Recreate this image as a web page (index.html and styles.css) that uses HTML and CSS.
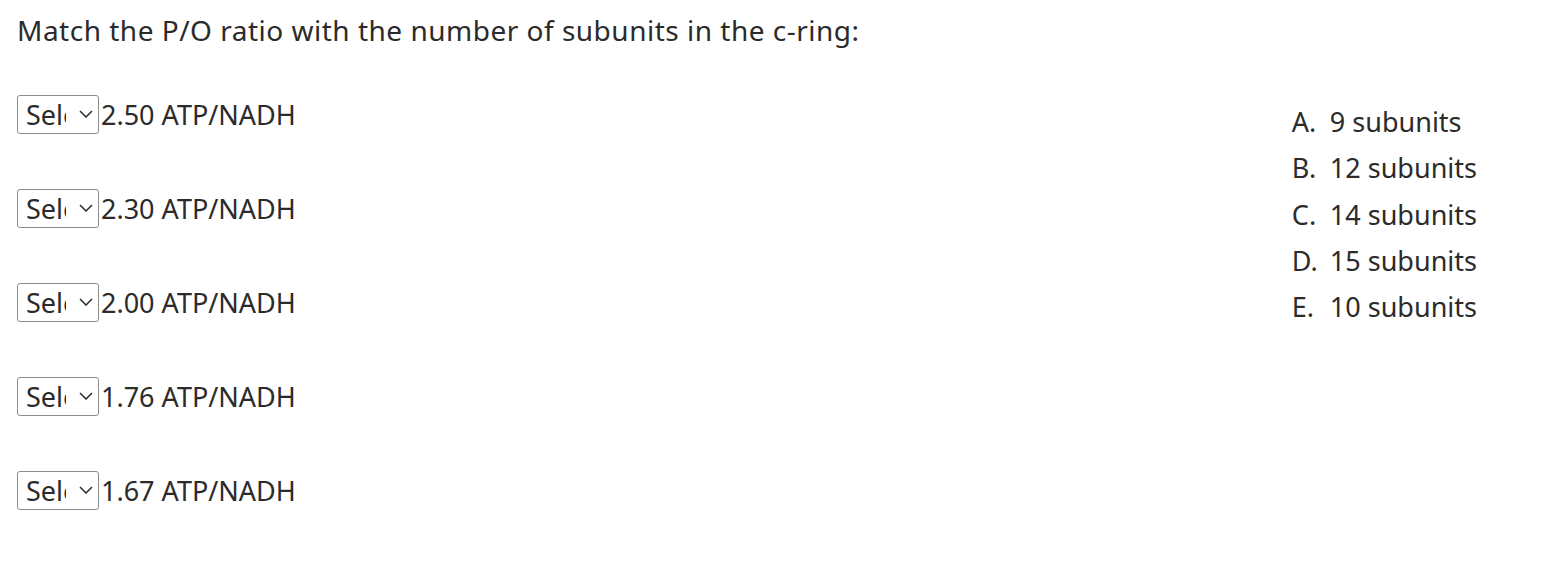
FILE: index.html
```html
<!DOCTYPE html>
<html lang="en">
<head>
  <meta charset="UTF-8" />
  <meta name="viewport" content="width=device-width, initial-scale=1.0" />
  <title>Matching question</title>
  <link rel="stylesheet" href="styles.css">
</head>
<body>
  <div class="question">
    <p class="prompt">Match the P/O ratio with the number of subunits in the c-ring:</p>
    <div class="match">
      <div class="pairs">
        <div class="pair">
          <span class="picker">
            <select><option>Select</option><option>A</option><option>B</option><option>C</option><option>D</option><option>E</option></select>
            <svg class="chevron" viewBox="0 0 14 8"><path d="M1 1 L7 7 L13 1" /></svg>
          </span>
          <span class="label">2.50 ATP/NADH</span>
        </div>
        <div class="pair">
          <span class="picker">
            <select><option>Select</option><option>A</option><option>B</option><option>C</option><option>D</option><option>E</option></select>
            <svg class="chevron" viewBox="0 0 14 8"><path d="M1 1 L7 7 L13 1" /></svg>
          </span>
          <span class="label">2.30 ATP/NADH</span>
        </div>
        <div class="pair">
          <span class="picker">
            <select><option>Select</option><option>A</option><option>B</option><option>C</option><option>D</option><option>E</option></select>
            <svg class="chevron" viewBox="0 0 14 8"><path d="M1 1 L7 7 L13 1" /></svg>
          </span>
          <span class="label">2.00 ATP/NADH</span>
        </div>
        <div class="pair">
          <span class="picker">
            <select><option>Select</option><option>A</option><option>B</option><option>C</option><option>D</option><option>E</option></select>
            <svg class="chevron" viewBox="0 0 14 8"><path d="M1 1 L7 7 L13 1" /></svg>
          </span>
          <span class="label">1.76 ATP/NADH</span>
        </div>
        <div class="pair">
          <span class="picker">
            <select><option>Select</option><option>A</option><option>B</option><option>C</option><option>D</option><option>E</option></select>
            <svg class="chevron" viewBox="0 0 14 8"><path d="M1 1 L7 7 L13 1" /></svg>
          </span>
          <span class="label">1.67 ATP/NADH</span>
        </div>
      </div>
      <ol class="choices">
        <li><span class="key">A.</span>9 subunits</li>
        <li><span class="key">B.</span>12 subunits</li>
        <li><span class="key">C.</span>14 subunits</li>
        <li><span class="key">D.</span>15 subunits</li>
        <li><span class="key">E.</span>10 subunits</li>
      </ol>
    </div>
  </div>
</body>
</html>
```

FILE: styles.css
```css
body {
  margin: 0;
  font-family: "Noto Sans", "Open Sans", sans-serif;
  color: #2b2b2b;
  background: #fff;
}
.question {
  padding: 10px 17px;
}
.prompt {
  margin: 0;
  font-size: 28px;
  letter-spacing: 0.5px;
  line-height: 40px;
}
.match {
  display: flex;
  justify-content: space-between;
  margin-top: 45px;
}
.pairs {
  display: flex;
  flex-direction: column;
  gap: 55px;
}
.pair {
  display: flex;
  align-items: center;
  height: 39px;
}
.picker {
  position: relative;
  width: 82px;
  height: 39px;
}
.picker select {
  appearance: none;
  -webkit-appearance: none;
  width: 100%;
  height: 100%;
  margin: 0;
  padding: 0 32px 0 8px;
  border: 1px solid #8c8c8c;
  border-radius: 3px;
  background: #fff;
  color: #2b2b2b;
  font-family: inherit;
  font-size: 27px;
}
.chevron {
  position: absolute;
  right: 6px;
  top: 15px;
  width: 14px;
  height: 8px;
  fill: none;
  stroke: #2b2b2b;
  stroke-width: 1.5;
  pointer-events: none;
}
.label {
  margin-left: 2px;
  font-size: 27px;
}
.choices {
  list-style: none;
  margin: 4px 0 0;
  padding: 0 54px 0 0;
  font-size: 27px;
}
.choices li {
  height: 46.3px;
  line-height: 46px;
}
.key {
  display: inline-block;
  width: 38px;
}
```
